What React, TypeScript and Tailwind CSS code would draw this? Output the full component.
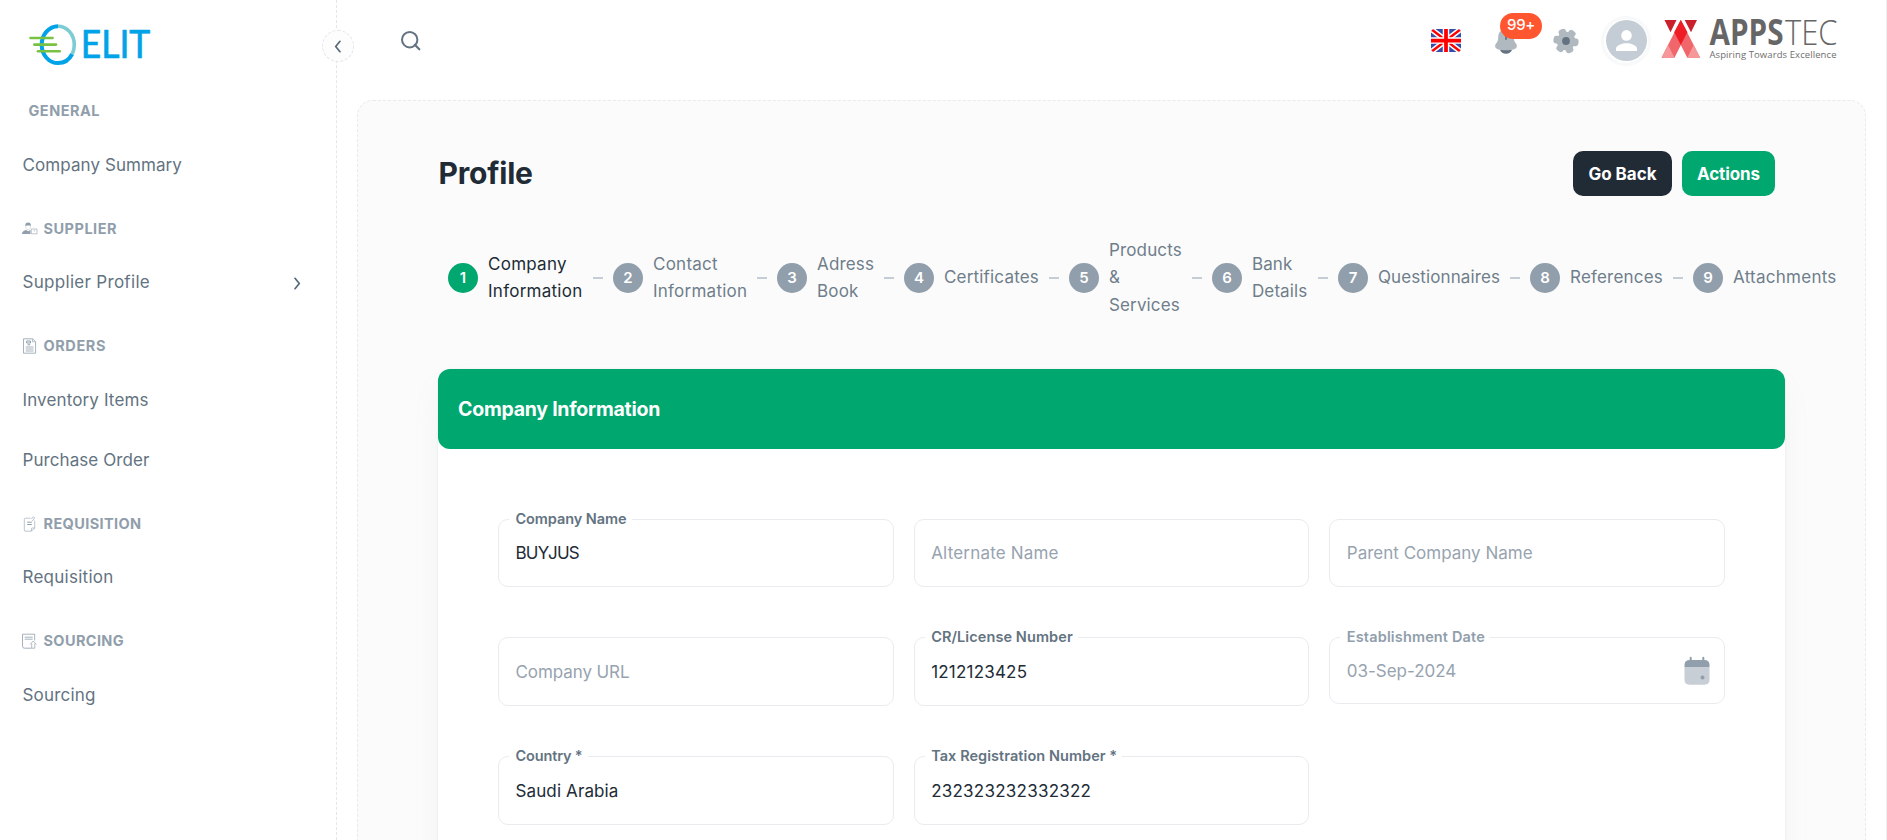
import type { ReactNode } from 'react';

/* ---------- Logos ---------- */

function ElitLogo() {
  return (
    <svg width="124" height="46" viewBox="0 0 124 46" className="block overflow-visible">
      <path d="M30 4.300A16.300 18.400 0 0 0 30 41.100C36 41.100 41.400 37.500 44.200 32" fill="none" stroke="#00a3e8" strokeWidth="4" />
      <path d="M30 4.300C39 4.300 46.300 12.500 46.300 22.700C46.300 26 45.600 29.200 44.200 32" fill="none" stroke="#7bcdd3" strokeWidth="3.600" />
      <g stroke="#78c143" strokeWidth="2.600" strokeLinecap="round">
        <path d="M2.500 16H24.500" />
        <path d="M6.300 22.600H28" />
        <path d="M10 29.200H31.700" />
      </g>
      <text
        x="52.800"
        y="36"
        textLength="69.500"
        lengthAdjust="spacingAndGlyphs"
        fill="#00a3e8"
        stroke="#00a3e8"
        strokeWidth=".7"
        strokeLinejoin="round"
        className="font-['Lato'] text-[38px]"
      >
        ELIT
      </text>
    </svg>
  );
}

function AppstecLogo() {
  return (
    <svg width="178" height="46" viewBox="0 0 178 46" className="block overflow-visible">
      <path d="M3.500 4H15.500L9.500 16.300ZM23.700 4H36L30 16.300Z" fill="#c9202b" />
      <path d="M19.800 4L.500 41.700H13.500L26.300 16.300Z" fill="#f1666a" />
      <path d="M19.800 4L39.200 41.700H26.300L13.300 16.300Z" fill="#f1666a" />
      <path d="M.500 41.700L7 29L13.500 41.700ZM39.200 41.700L32.700 29L26.300 41.700Z" fill="#f6989a" />
      <path d="M19.800 4L26.300 16.300L19.800 29L13.300 16.300Z" fill="#ee1c25" />
      <text x="48.500" y="29" textLength="74" lengthAdjust="spacingAndGlyphs" fill="#666666" className="font-['Open_Sans'] text-[35px] font-bold">
        APPS
      </text>
      <text x="124" y="29" textLength="52.500" lengthAdjust="spacingAndGlyphs" fill="#666666" className="font-['Open_Sans'] text-[35px] font-light">
        TEC
      </text>
      <text x="48.500" y="41.500" textLength="127" fill="#6e6e6e" className="font-['Open_Sans'] text-[9.500px]">
        Aspiring Towards Excellence
      </text>
    </svg>
  );
}

/* ---------- Icons ---------- */

function SupplierIcon() {
  return (
    <svg width="16" height="16" viewBox="0 0 16 16" fill="#919eab">
      <path d="M3.300 5C3.100 2.600 4.300 1.500 6.100 1.500S9.200 2.600 9 5C9.300 4.900 8.400 4.400 7.500 4.400S4.400 4.400 3.300 5Z" />
      <path d="M3.800 5V6.600C4.200 8 5.200 8.600 6.100 8.600S8.200 8 8.500 6.600V5" fill="none" stroke="#919eab" strokeWidth=".5" opacity=".6" />
      <path d="M0 13C0 10.600 1.400 9.600 4.200 8.900L6.100 10.300L8.500 9V13Z" />
      <path d="M9.300 8H15V12.800H9.300ZM11.500 9.800H13.200" fill="none" stroke="#919eab" strokeWidth=".6" />
    </svg>
  );
}

function OrdersIcon() {
  return (
    <svg width="16" height="16" viewBox="0 0 16 16" fill="none" stroke="#919eab" strokeWidth=".8">
      <path d="M1.500 .8H10.500L13.600 3.800V15.200H1.500Z" />
      <path d="M10.500 .8V3.800H13.600" strokeWidth=".6" />
      <path d="M4.700 3H8.500V5H4.700ZM5.500 6.800H8.300" strokeWidth="1" />
      <path d="M3.700 9H11.500M3.700 11H11.500M3.700 13H11.500" />
    </svg>
  );
}

function RequisitionIcon() {
  return (
    <svg width="16" height="16" viewBox="0 0 16 16" fill="none" stroke="#919eab" strokeWidth=".6">
      <path d="M8.500 2.200H3.500Q2.300 2.200 2.300 3.500V13.800Q2.300 15.200 3.600 15.200H9.500L12.700 12V4.500" />
      <path d="M9.500 15V12.500Q9.500 12 10 12H12.700" />
      <path d="M9.500 3L10.500 1.300Q12 .3 12.500 1.800L11.200 4.200L9.800 5" />
      <path d="M5.200 6.200H9.800M5.200 8.500H9.800" strokeWidth="1" />
    </svg>
  );
}

function SourcingIcon() {
  return (
    <svg width="16" height="16" viewBox="0 0 16 16" fill="none" stroke="#919eab" strokeWidth=".8">
      <path d="M12.700 7.500V1.200H.5V13.200Q.5 15.200 2.500 15.200H9.500" />
      <path d="M2.700 4.200H10.700M2.700 6.200H10.700" />
      <path d="M8 11.500L11.200 8L14.500 11.500M9.700 10.500V15.200H12.800V10.500" strokeWidth=".7" />
    </svg>
  );
}

function Flag() {
  return (
    <svg width="30" height="23" viewBox="0 0 60 46" className="block rounded-[4px]" preserveAspectRatio="none">
      <rect width="60" height="46" fill="#3b4ba8" />
      <path d="M0 0L60 46M60 0L0 46" stroke="#fff" strokeWidth="11" />
      <path d="M0 0L60 46M60 0L0 46" stroke="#f00" strokeWidth="5" />
      <path d="M30 0V46M0 23H60" stroke="#fff" strokeWidth="13" />
      <path d="M30 0V46M0 23H60" stroke="#f00" strokeWidth="7.500" />
    </svg>
  );
}

function Bell() {
  return (
    <svg width="24" height="26" viewBox="0 0 24 26" className="block">
      <path d="M6 22H18C17 24.300 14.800 25.700 12 25.700S7 24.300 6 22Z" fill="#637381" />
      <path d="M12 1C7 1 4.300 4.800 4.200 9C4.100 12.500 3.700 13.500 2 15.500C.5 17.500 .8 20 3.200 20.900C6 22 9 22.300 12 22.300S18 22 20.800 20.900C23.200 20 23.500 17.500 22 15.500C20.300 13.500 19.900 12.500 19.800 9C19.700 4.800 17 1 12 1Z" fill="#b1b9c0" />
      <path d="M12 5.500V11" stroke="#637381" strokeWidth="1.800" strokeLinecap="round" />
    </svg>
  );
}

function Gear() {
  return (
    <svg width="26" height="26" viewBox="-13 -13 26 26" className="block">
      <g fill="#b1b9c0">
        <circle r="9.300" />
        <rect x="-12.600" y="-3.800" width="25.200" height="7.600" rx="2.800" transform="rotate(8)" />
        <rect x="-12.600" y="-3.800" width="25.200" height="7.600" rx="2.800" transform="rotate(68)" />
        <rect x="-12.600" y="-3.800" width="25.200" height="7.600" rx="2.800" transform="rotate(128)" />
      </g>
      <circle r="3.900" fill="#637381" />
    </svg>
  );
}

function CalendarIcon() {
  return (
    <svg width="26" height="30" viewBox="0 0 26 30" className="block">
      <path d="M.5 11H25.500V23.500Q25.500 28.700 20.500 28.700H5.500Q.5 28.700 .5 23.500Z" fill="#c8ced5" />
      <path d="M.5 11V9Q.5 4 6 4H20Q25.500 4 25.500 9V11Z" fill="#919eab" />
      <path d="M6.700 1.800V5M19.300 1.800V5" stroke="#919eab" strokeWidth="2" strokeLinecap="round" />
      <circle cx="18.500" cy="21.500" r="2" fill="#919eab" />
    </svg>
  );
}

function Chevron({ left = false }: { left?: boolean }) {
  return (
    <svg width="8" height="13" viewBox="0 0 8 13" fill="none" stroke="#56687a" strokeWidth="1.700" strokeLinecap="round" strokeLinejoin="round" className="block">
      <path d={left ? 'M6 1.300L1.700 6.500L6 11.700' : 'M2 1.300L6.300 6.500L2 11.700'} />
    </svg>
  );
}

/* ---------- Sidebar ---------- */

function NavHeading({ icon, label, tracking }: { icon?: ReactNode; label: string; tracking: string }) {
  return (
    <div className={`flex h-[57.500px] items-center pt-[11px] text-[14.500px] font-bold text-[#919eab] ${icon ? 'gap-[5.500px] pl-[22px]' : 'pl-[28.500px]'}`}>
      {icon}
      <span className={tracking}>{label}</span>
    </div>
  );
}

function NavItem({ label, tracking, expandable }: { label: string; tracking: string; expandable?: boolean }) {
  return (
    <a className="flex h-[60px] items-center justify-between pt-[2px] pr-[35px] pl-[22.500px] text-[17px] text-[#637381]">
      <span className={tracking}>{label}</span>
      {expandable && <Chevron />}
    </a>
  );
}

function Sidebar() {
  return (
    <aside className="relative h-[840px] w-[337px] shrink-0 border-r border-dashed border-[#e4e7ea] bg-white">
      <div className="h-[77px] pt-[22px] pl-[28px]">
        <ElitLogo />
      </div>
      <nav>
        <NavHeading label="GENERAL" tracking="tracking-[0.490px]" />
        <NavItem label="Company Summary" tracking="tracking-[0.080px]" />
        <NavHeading icon={<SupplierIcon />} label="SUPPLIER" tracking="tracking-[0.500px]" />
        <NavItem label="Supplier Profile" tracking="tracking-[0.300px]" expandable />
        <NavHeading icon={<OrdersIcon />} label="ORDERS" tracking="tracking-[0.580px]" />
        <NavItem label="Inventory Items" tracking="tracking-[0.130px]" />
        <NavItem label="Purchase Order" tracking="tracking-[0.080px]" />
        <NavHeading icon={<RequisitionIcon />} label="REQUISITION" tracking="tracking-[0.380px]" />
        <NavItem label="Requisition" tracking="tracking-[0.260px]" />
        <NavHeading icon={<SourcingIcon />} label="SOURCING" tracking="tracking-[0.370px]" />
        <NavItem label="Sourcing" tracking="tracking-[0.180px]" />
      </nav>
      <button className="absolute top-[30px] right-[-18px] flex size-[32px] items-center justify-center rounded-full border border-dashed border-[#e2e5e9] bg-[#fdfdfd]">
        <Chevron left />
      </button>
    </aside>
  );
}

/* ---------- Top bar ---------- */

function TopBar() {
  return (
    <header className="flex h-[100px] items-start justify-between pr-[47px] pl-[64px]">
      <svg width="20" height="20" viewBox="0 0 20 20" fill="none" stroke="#637381" strokeWidth="2" className="mt-[31px]">
        <circle cx="8.700" cy="8.700" r="7.700" />
        <path d="M13.800 13.800L18.300 18.300" strokeLinecap="round" strokeWidth="2.200" />
      </svg>
      <div className="flex h-[81px] items-center">
        <Flag />
        <div className="relative ml-[33px]">
          <Bell />
          <span className="absolute -top-[15px] left-[6px] flex h-[26px] w-[42px] items-center justify-center rounded-full bg-[#ff5630] text-[15px] font-medium tracking-[-0.300px] text-white">
            99+
          </span>
        </div>
        <div className="ml-[35px]">
          <Gear />
        </div>
        <div className="ml-[22px] flex size-[50px] items-center justify-center rounded-full border-[3px] border-[#f7f9fa]">
          <div className="size-[41px] rounded-full bg-[#c4cdd5]">
            <svg width="41" height="41" viewBox="0 0 41 41" fill="#fff" className="block">
              <circle cx="20.500" cy="15.400" r="5.300" />
              <path d="M10 31V28.600C10 25.200 16.500 23.200 20.500 23.200S31 25.200 31 28.600V31Z" />
            </svg>
          </div>
        </div>
        <div className="-mt-[3px] ml-[10px]">
          <AppstecLogo />
        </div>
      </div>
    </header>
  );
}

/* ---------- Stepper ---------- */

const STEPS = [
  { label: 'Company Information', style: 'w-[95px] tracking-[0.260px]' },
  { label: 'Contact Information', style: 'w-[94px] tracking-[0.240px]' },
  { label: 'Adress Book', style: 'w-[57px] tracking-[0.160px]' },
  { label: 'Certificates', style: 'w-[95px] tracking-[0.180px]' },
  { label: 'Products & Services', style: 'w-[73px] tracking-[0.140px]' },
  { label: 'Bank Details', style: 'w-[56px] tracking-[0.100px]' },
  { label: 'Questionnaires', style: 'w-[122px] tracking-[0.100px]' },
  { label: 'References', style: 'w-[93px] tracking-[0.200px]' },
  { label: 'Attachments', style: 'w-[104px] tracking-[0.260px]' },
];

function Stepper() {
  return (
    <ol className="mt-[40px] flex h-[84px] items-center gap-[10px] pl-[10px]">
      {STEPS.map((step, i) => (
        <li key={step.label} className="flex shrink-0 items-center gap-[10px]">
          {i > 0 && <span className="h-[2px] w-[10px] bg-[#c4cdd5]" />}
          <span className={`flex size-[30px] items-center justify-center rounded-full pt-px text-[15px] font-semibold text-white ${i === 0 ? 'bg-[#00a76f]' : 'bg-[#919eab]'}`}>
            {i + 1}
          </span>
          <span className={`text-[17px] leading-[27.300px] ${step.style} ${i === 0 ? 'text-[#212b36]' : 'text-[#6f7e8b]'}`}>{step.label}</span>
        </li>
      ))}
    </ol>
  );
}

/* ---------- Form ---------- */

interface FieldProps {
  label: string;
  labelTracking?: string;
  value?: string;
  tracking: string;
  height: string;
  muted?: boolean;
  icon?: ReactNode;
}

function Field({ label, labelTracking = '', value, tracking, height, muted, icon }: FieldProps) {
  const tone = muted || value === undefined ? 'text-[#97a3af]' : 'text-[#212b36]';
  return (
    <div className={`relative flex items-center justify-between rounded-[10px] border border-[#e9ebee] pr-[14px] pl-[16.500px] text-[17px] whitespace-nowrap ${height} ${tone}`}>
      {value !== undefined && (
        <span className={`absolute -top-[11px] left-[10px] bg-white pr-[5px] pl-[6.500px] text-[14.500px] leading-[20px] font-semibold ${labelTracking} ${muted ? 'text-[#919eab]' : 'text-[#637381]'}`}>
          {label}
        </span>
      )}
      <span className={`pt-[2px] ${tracking}`}>{value ?? label}</span>
      {icon}
    </div>
  );
}

function CompanyCard() {
  return (
    <section className="mt-[49px] h-[600px] rounded-[16px] bg-white shadow-[0_0_2px_0_rgba(145,158,171,0.2),0_15px_30px_-5px_rgba(145,158,171,0.12)]">
      <div className="flex h-[80px] items-center rounded-[12px] bg-[#00a76f] px-[20px] pt-px text-[19.500px] font-bold tracking-[-0.250px] text-white">
        Company Information
      </div>
      <div className="grid grid-cols-3 items-start gap-x-[20px] gap-y-[50px] px-[60px] pt-[70px]">
        <Field height="h-[68px]" label="Company Name" labelTracking="tracking-[-0.070px]" value="BUYJUS" tracking="tracking-[-0.750px]" />
        <Field height="h-[68px]" label="Alternate Name" tracking="tracking-[0.190px]" />
        <Field height="h-[68px]" label="Parent Company Name" tracking="tracking-normal" />
        <Field height="h-[69px]" label="Company URL" tracking="tracking-[-0.090px]" />
        <Field height="h-[69px]" label="CR/License Number" labelTracking="tracking-[0.090px]" value="1212123425" tracking="tracking-[0.200px]" />
        <Field
          height="h-[67px]"
          label="Establishment Date"
          labelTracking="tracking-[0.150px]"
          value="03-Sep-2024"
          tracking="tracking-[-0.020px]"
          muted
          icon={<CalendarIcon />}
        />
        <Field height="h-[69px]" label="Country *" labelTracking="tracking-[-0.150px]" value="Saudi Arabia" tracking="tracking-[0.120px]" />
        <Field height="h-[69px]" label="Tax Registration Number *" labelTracking="tracking-[0.060px]" value="232323232332322" tracking="tracking-[0.240px]" />
      </div>
    </section>
  );
}

export default function App() {
  return (
    <div className="flex h-[840px] w-full overflow-hidden bg-white font-['Inter',sans-serif] antialiased">
      <Sidebar />
      <div className="min-w-0 flex-1 border-r border-[#eeeff1]">
        <TopBar />
        <main className="mr-[20px] ml-[20px] h-[800px] rounded-t-[16px] border border-dashed border-[#e8eaed] bg-[#fbfbfb] px-[80px] pt-[50px]">
          <div className="flex h-[45px] items-center justify-between pr-[10px]">
            <h1 className="pl-[0.500px] text-[30px] font-bold tracking-[-0.200px] text-[#212b36]">Profile</h1>
            <div className="flex gap-[10px] text-[17px] font-bold text-white">
              <button className="h-[45px] w-[99px] rounded-[10px] bg-[#212b36] pt-[2px]">Go Back</button>
              <button className="h-[45px] w-[93px] rounded-[10px] bg-[#00a76f] pt-[2px] tracking-[-0.100px]">Actions</button>
            </div>
          </div>
          <Stepper />
          <CompanyCard />
        </main>
      </div>
    </div>
  );
}
